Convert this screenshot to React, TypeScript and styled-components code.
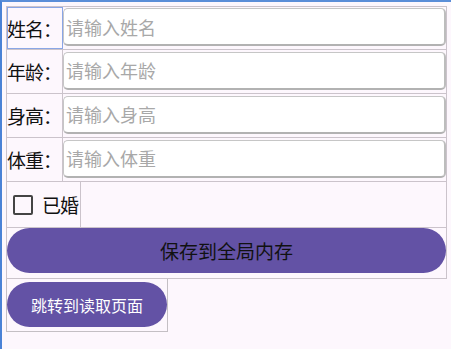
import React from 'react';
import styled, { createGlobalStyle } from 'styled-components';

const GlobalStyle = createGlobalStyle`
  html, body {
    margin: 0;
    padding: 0;
    background-color: #fdf7fd;
  }
  * {
    box-sizing: border-box;
  }
`;

const Page = styled.div`
  width: 451px;
  height: 349px;
  border-left: 2px solid #4a82d6;
  border-top: 2px solid #5b8ed8;
  padding: 4px 4px 0 4px;
  font-family: "Noto Sans CJK SC", "Noto Sans", sans-serif;
  color: #111;
  overflow: hidden;
`;

const Table = styled.div`
  width: 441px;
  display: flex;
  flex-direction: column;
  border: 1px solid #cbc3cb;
  border-bottom: none;
`;

const Row = styled.div<{ $h: number }>`
  display: flex;
  height: ${(p) => p.$h}px;
  border-bottom: 1px solid #cbc3cb;
`;

const Label = styled.div<{ $focused?: boolean }>`
  width: 56px;
  flex: none;
  display: flex;
  align-items: center;
  font-size: 19px;
  letter-spacing: -1px;
  line-height: 1;
  border-right: 1px solid ${(p) => (p.$focused ? '#8aa6e6' : '#cbc3cb')};
  ${(p) => p.$focused && 'outline: 1px solid #8aa6e6; outline-offset: -1px;'}
  white-space: nowrap;
  overflow: hidden;
`;

const InputCell = styled.div`
  flex: 1;
  padding: 1px 0 3px 0;
  display: flex;
  align-items: center;
`;

const Input = styled.input`
  width: 100%;
  height: 38px;
  border: 1px solid #c6c6c6;
  border-bottom: 2px solid #b2b2b2;
  border-right: 2px solid #bdbdbd;
  border-radius: 5px;
  background: #fff;
  padding: 0 2px;
  font-family: inherit;
  font-size: 18px;
  color: #222;
  outline: none;
  &::placeholder {
    color: #a8a8a8;
  }
`;

const CheckCell = styled.label`
  width: 74px;
  flex: none;
  display: flex;
  align-items: center;
  gap: 9px;
  padding-left: 6px;
  font-size: 19px;
  letter-spacing: -1px;
  border-right: 1px solid #cbc3cb;
`;

const Box = styled.span`
  width: 20px;
  height: 20px;
  border: 2px solid #444;
  border-radius: 2px;
  flex: none;
`;

const ButtonCell = styled.div`
  flex: 1;
  display: flex;
  align-items: flex-start;
`;

const PillButton = styled.button<{ $light?: boolean; $size: number }>`
  width: 100%;
  height: 45px;
  border: none;
  border-radius: 23px;
  background-color: #6352a5;
  color: ${(p) => (p.$light ? '#ffffff' : '#111111')};
  font-family: inherit;
  font-size: ${(p) => p.$size}px;
  cursor: pointer;
`;

const JumpBox = styled.div`
  width: 162px;
  height: 53px;
  border: 1px solid #c4bfc4;
  border-top: none;
  padding-top: 3px;
`;

const fields = [
  { label: '姓名：', placeholder: '请输入姓名' },
  { label: '年龄：', placeholder: '请输入年龄' },
  { label: '身高：', placeholder: '请输入身高' },
  { label: '体重：', placeholder: '请输入体重' },
];

const App: React.FC = () => (
  <>
    <GlobalStyle />
    <Page>
      <Table>
        {fields.map((f, i) => (
          <Row key={f.label} $h={i === 0 ? 43 : 44}>
            <Label $focused={i === 0}>{f.label}</Label>
            <InputCell>
              <Input placeholder={f.placeholder} />
            </InputCell>
          </Row>
        ))}
        <Row $h={46}>
          <CheckCell>
            <Box />
            已婚
          </CheckCell>
        </Row>
        <Row $h={51}>
          <ButtonCell>
            <PillButton $size={19}>保存到全局内存</PillButton>
          </ButtonCell>
        </Row>
      </Table>
      <JumpBox>
        <PillButton $light $size={16}>跳转到读取页面</PillButton>
      </JumpBox>
    </Page>
  </>
);

export default App;
